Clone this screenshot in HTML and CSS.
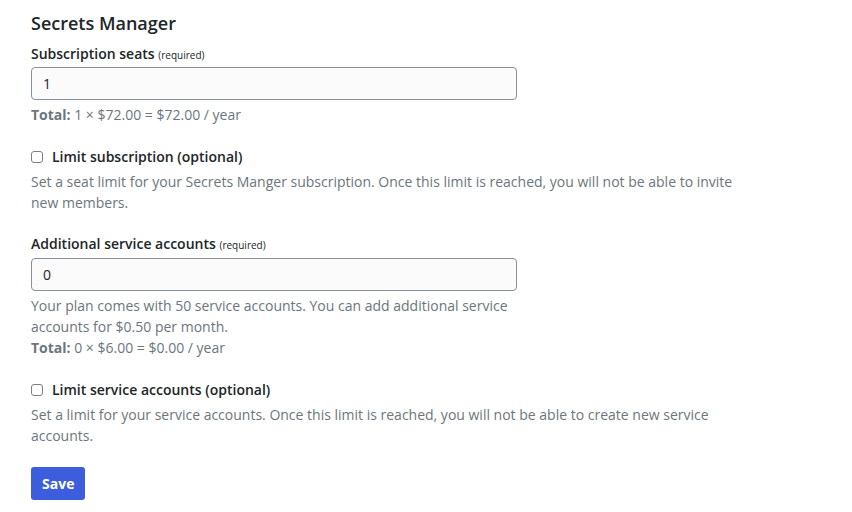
FILE: index.html
```html
<!DOCTYPE html>
<html>
<head>
<meta charset="utf-8">
<link rel="stylesheet" href="styles.css">
</head>
<body>
<div class="page">
  <h3 class="title">Secrets Manager</h3>

  <div class="field">
    <label class="label">Subscription seats <small>(required)</small></label>
    <div class="col"><div class="input">1</div></div>
    <div class="hint"><b>Total:</b> 1 × $72.00 = $72.00 / year</div>
  </div>

  <div class="check-group">
    <label class="check"><span class="box"></span>Limit subscription (optional)</label>
    <div class="hint wide">Set a seat limit for your Secrets Manger subscription. Once this limit is reached, you will not be able to invite new members.</div>
  </div>

  <div class="field">
    <label class="label label-loose">Additional service accounts <small>(required)</small></label>
    <div class="col"><div class="input">0</div></div>
    <div class="hint col">Your plan comes with 50 service accounts. You can add additional service accounts for $0.50 per month.<br><b>Total:</b> 0 × $6.00 = $0.00 / year</div>
  </div>

  <div class="check-group">
    <label class="check"><span class="box"></span>Limit service accounts (optional)</label>
    <div class="hint wide">Set a limit for your service accounts. Once this limit is reached, you will not be able to create new service accounts.</div>
  </div>

  <button class="btn">Save</button>
</div>
</body>
</html>
```
FILE: styles.css
```css
html, body {
  margin: 0;
  padding: 0;
  background: #ffffff;
}
body {
  font-family: "Open Sans", "Liberation Sans", sans-serif;
  font-size: 14px;
  color: #212529;
}
.page {
  padding: 12px 0 0 31px;
}
.title {
  margin: 0 0 10px 0;
  font-size: 18px;
  line-height: 22px;
  font-weight: 600;
  color: #212529;
}
.field {
  margin-bottom: 21px;
}
.label {
  display: block;
  font-weight: 600;
  line-height: 20px;
  margin-bottom: 2px;
}
.label-loose {
  margin-bottom: 3px;
}
.label small {
  font-size: 10px;
  font-weight: 400;
  color: #212529;
}
.col {
  width: 486px;
}
.input {
  box-sizing: border-box;
  height: 33px;
  border: 1px solid #8a9099;
  border-radius: 4px;
  background: #fbfbfb;
  padding: 0 11px;
  line-height: 31px;
  font-size: 14px;
  color: #212529;
}
.hint {
  margin-top: 4px;
  color: #6c757d;
  line-height: 21px;
}
.hint b {
  font-weight: 700;
}
.wide {
  width: 715px;
}
.check-group {
  margin-bottom: 21px;
}
.check {
  display: flex;
  align-items: center;
  font-weight: 600;
  line-height: 21px;
}
.box {
  box-sizing: border-box;
  width: 12px;
  height: 12px;
  border: 1px solid #7a7f87;
  border-radius: 3px;
  background: #fff;
  margin-right: 9px;
}
.btn {
  display: block;
  height: 33px;
  padding: 0 11px;
  border: none;
  border-radius: 3px;
  background: #3c5edc;
  color: #ffffff;
  font-family: "Open Sans", "Liberation Sans", sans-serif;
  font-size: 14px;
  font-weight: 700;
  cursor: pointer;
  margin-top: 21px;
}
```
